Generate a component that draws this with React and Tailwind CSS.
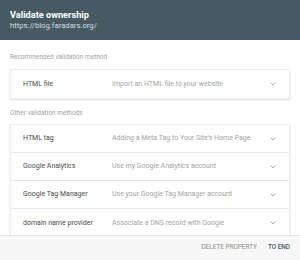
const methods = [
  { name: 'HTML tag', desc: "Adding a Meta Tag to Your Site's Home Page" },
  { name: 'Google Analytics', desc: 'Use my Google Analytics account' },
  { name: 'Google Tag Manager', desc: 'Use your Google Tag Manager account' },
  { name: 'domain name provider', desc: 'Associate a DNS record with Google' },
];

function Chevron() {
  return (
    <svg width="6" height="4" viewBox="0 0 6 4" fill="none">
      <path d="M0.6 0.6 L3 3 L5.4 0.6" stroke="#a3a3a3" strokeWidth="0.9" />
    </svg>
  );
}

function Row({ name, desc, last }) {
  return (
    <div className={`flex items-center h-[28px] pl-[12px] pr-[13px] ${last ? '' : 'border-b border-[#e8e8e8]'}`}>
      <div className="w-[89px] text-[7px] text-[#4a4a4a]">{name}</div>
      <div className="flex-1 text-[7px] text-[#a3a3a3]">{desc}</div>
      <Chevron />
    </div>
  );
}

export default function App() {
  return (
    <div className="w-[300px] h-[260px] flex flex-col bg-white overflow-hidden" style={{ fontFamily: 'Roboto, "Liberation Sans", sans-serif' }}>
      {/* header */}
      <div className="h-[40px] shrink-0 bg-[#475a64] px-[10px] pt-[8px]">
        <div className="text-[9.2px] leading-[13px] font-bold text-white">Validate ownership</div>
        <div className="text-[7.7px] leading-[10px] text-[#d5dde1]">https://blog.faradars.org/</div>
      </div>

      <div className="flex-1 overflow-hidden px-[10px]">
        <div className="pt-[13px] pb-[8px] text-[6.5px] leading-[8px] text-[#a3a3a3]">Recommended validation method</div>
        <div className="bg-white border border-[#ededed] shadow-[0_1px_2px_rgba(0,0,0,0.15)]">
          <Row name="HTML file" desc="Import an HTML file to your website" last />
        </div>

        <div className="pt-[10px] pb-[7px] text-[6.5px] leading-[8px] text-[#a3a3a3]">Other validation methods</div>
        <div className="bg-white border border-[#ededed] shadow-[0_1px_2px_rgba(0,0,0,0.15)]">
          {methods.map((m, i) => (
            <Row key={m.name} name={m.name} desc={m.desc} last={i === methods.length - 1} />
          ))}
        </div>
      </div>

      {/* footer */}
      <div className="h-[25px] shrink-0 bg-[#f7f7f7] border-t border-[#e3e3e3] flex items-center justify-end gap-[11px] pr-[10px]">
        <span className="text-[6.4px] text-[#8a8a8a]">DELETE PROPERTY</span>
        <span className="text-[6.4px] font-medium text-[#475a64]">TO END</span>
      </div>
    </div>
  );
}
